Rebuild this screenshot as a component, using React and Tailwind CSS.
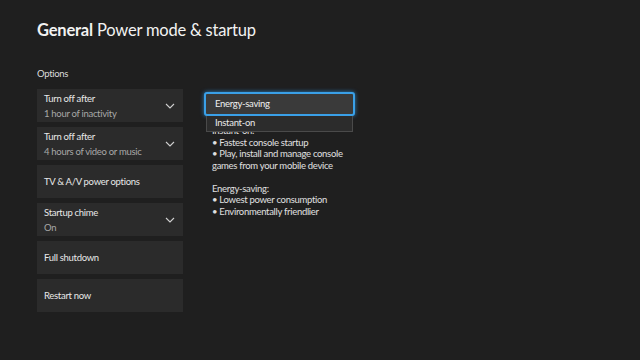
const font = { fontFamily: 'Lato, "Noto Sans", sans-serif' };

function Chevron() {
  return (
    <svg width="10" height="6" viewBox="0 0 10 6" className="shrink-0">
      <polyline points="1,1 5,5 9,1" fill="none" stroke="#d0d0d0" strokeWidth="1.1" />
    </svg>
  );
}

function Card({ title, value, select }) {
  return (
    <div className="flex h-[33px] items-center justify-between bg-[#2b2b2b] pl-[7px] pr-[8px]">
      <div className="flex flex-col leading-[15px] tracking-[-0.3px]">
        <span className="text-[9.5px] text-[#e8e8e8]">{title}</span>
        {value && <span className="text-[9.5px] text-[#a8a8a8]">{value}</span>}
      </div>
      {select && <Chevron />}
    </div>
  );
}

export default function App() {
  const cards = [
    { title: 'Turn off after', value: '1 hour of inactivity', select: true },
    { title: 'Turn off after', value: '4 hours of video or music', select: true },
    { title: 'TV & A/V power options' },
    { title: 'Startup chime', value: 'On', select: true },
    { title: 'Full shutdown' },
    { title: 'Restart now' },
  ];

  return (
    <div className="h-[360px] w-[640px] overflow-hidden bg-[#1f1f1f] px-[37px] pt-[19px]" style={font}>
      <h1 className="text-[16.5px] leading-[22px] tracking-[-0.2px] text-[#f2f2f2]">
        <span className="font-bold">General</span> Power mode &amp; startup
      </h1>
      <p className="mt-[27px] text-[9.5px] leading-[12px] tracking-[-0.3px] text-[#dcdcdc]">Options</p>
      <div className="mt-[9px] flex">
        <div className="flex w-[146px] flex-col gap-[5px]">
          {cards.map((c, i) => (
            <Card key={i} {...c} />
          ))}
        </div>
        <div className="relative ml-[29px] w-[145px]">
          <div className="pt-[36px] text-[9.5px] leading-[11.5px] tracking-[-0.3px] text-[#e0e0e0]">
            <p>Instant-on:</p>
            <p>• Fastest console startup</p>
            <p>• Play, install and manage console games from your mobile device</p>
            <p className="mt-[11.5px]">Energy-saving:</p>
            <p>• Lowest power consumption</p>
            <p>• Environmentally friendlier</p>
          </div>
          <div className="absolute left-[-8px] top-[3px] w-[151px]">
            <div className="flex h-[24px] items-center rounded-[3px] border-2 border-[#3aa0e8] bg-[#3a3a3a] pl-[9px] text-[9.5px] tracking-[-0.3px] text-[#f0f0f0] shadow-[0_0_4px_#2a7fc0]">
              Energy-saving
            </div>
            <div className="mx-[2px] flex h-[16px] items-center border border-t-0 border-[#4a4a4a] bg-[#2c2c2c] pl-[8px] text-[9.5px] tracking-[-0.3px] text-[#e8e8e8]">
              Instant-on
            </div>
          </div>
        </div>
      </div>
    </div>
  );
}
